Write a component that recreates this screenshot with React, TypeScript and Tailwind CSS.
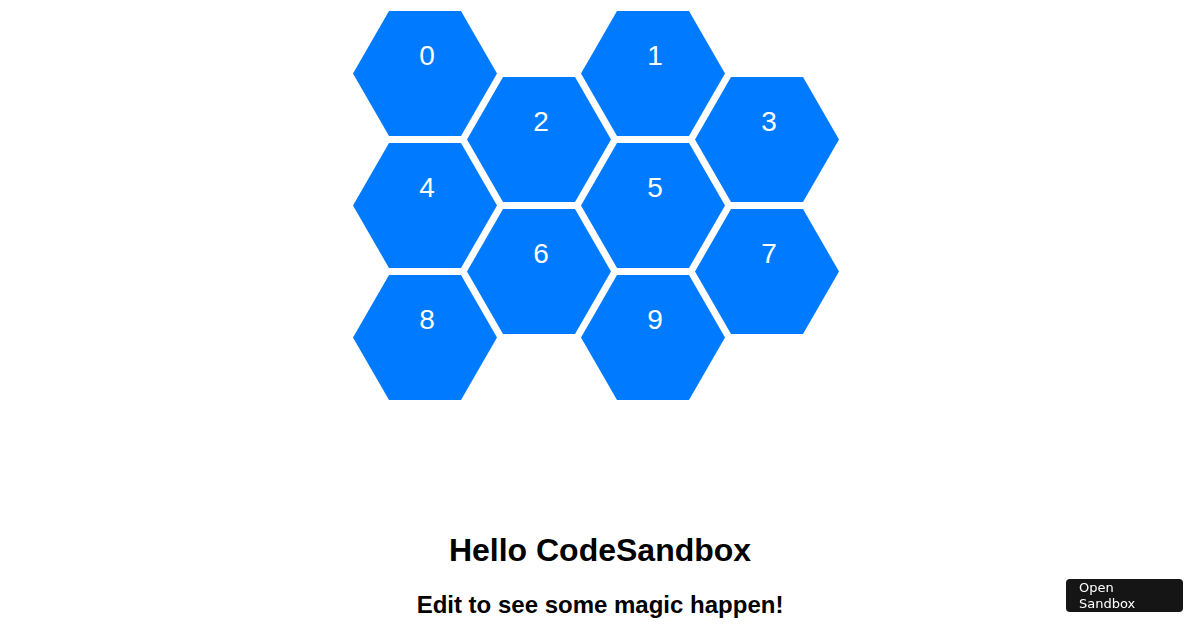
import React from "react";

const columns: { offset: boolean; items: number[] }[] = [
  { offset: false, items: [0, 4, 8] },
  { offset: true, items: [2, 6] },
  { offset: false, items: [1, 5, 9] },
  { offset: true, items: [3, 7] },
];

const Hexagon: React.FC<{ label: number }> = ({ label }) => (
  <div className="w-[144px] h-[125px] bg-[#007bff] [clip-path:polygon(25%_0,75%_0,100%_50%,75%_100%,25%_100%,0_50%)] flex justify-center pt-[29px] pl-[4px]">
    <span className="text-white text-[28px] leading-[32px]">{label}</span>
  </div>
);

export default function App() {
  return (
    <div className="min-h-[630px] bg-white font-['Liberation_Sans',Arial,sans-serif] text-black">
      <div className="flex justify-center pr-2 pt-[11px]">
        {columns.map((col, i) => (
          <div
            key={i}
            className={`flex flex-col gap-[7px] ${i > 0 ? "-ml-[30px]" : ""} ${
              col.offset ? "mt-[66px]" : ""
            }`}
          >
            {col.items.map((n) => (
              <Hexagon key={n} label={n} />
            ))}
          </div>
        ))}
      </div>

      <h1 className="mt-[132px] text-center text-[32px] leading-[37px] font-bold">
        Hello CodeSandbox
      </h1>
      <h2 className="mt-[22px] text-center text-[24px] leading-[28px] font-bold">
        Edit to see some magic happen!
      </h2>

      <a className="fixed right-[17px] bottom-[18px] w-[117px] h-[33px] rounded-[4px] bg-[#151515] pl-[13px] pt-[1px] text-white text-[13px] leading-[15.5px] font-['DejaVu_Sans',sans-serif]">
        <span className="block">Open</span>
        <span className="block">Sandbox</span>
      </a>
    </div>
  );
}
